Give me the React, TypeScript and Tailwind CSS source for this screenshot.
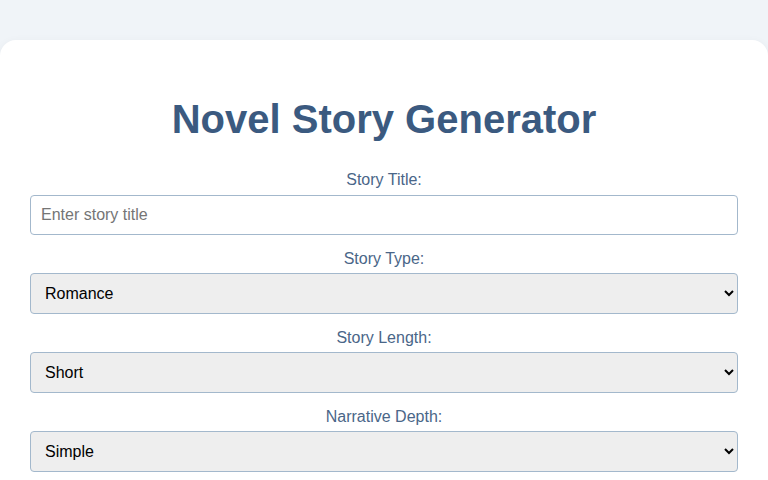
import React, { useState } from "react";

const fields = [
  { id: "type", label: "Story Type:", options: ["Romance", "Fantasy", "Mystery", "Sci-Fi", "Horror"] },
  { id: "length", label: "Story Length:", options: ["Short", "Medium", "Long"] },
  { id: "depth", label: "Narrative Depth:", options: ["Simple", "Moderate", "Complex"] },
];

export default function App() {
  const [title, setTitle] = useState("");

  return (
    <div className="min-h-screen bg-[#f0f4f8] pt-[40px] font-['Liberation_Sans',Arial,sans-serif]">
      <div className="bg-white rounded-t-[16px] px-[30px] pt-[30px] pb-[30px] shadow-[0_2px_10px_rgba(0,0,0,0.05)]">
        <h1 className="mt-[26px] mb-[29px] text-center text-[40px] leading-[46px] font-bold text-[#3b5a80]">
          Novel Story Generator
        </h1>

        {/* Title input */}
        <div className="mb-[15px]">
          <label className="block text-center text-[16px] leading-[18px] text-[#4a6688] mb-[6px]">
            Story Title:
          </label>
          <input
            value={title}
            onChange={(e) => setTitle(e.target.value)}
            placeholder="Enter story title"
            className="block w-full border border-[#a3b8cc] rounded-[4px] px-[10px] py-[10px] text-[16px] leading-[18px] text-black placeholder:text-[#757575] outline-none"
          />
        </div>

        {fields.map((f) => (
          <div key={f.id} className="mb-[15px]">
            <label className="block text-center text-[16px] leading-[18px] text-[#4a6688] mb-[5px]">
              {f.label}
            </label>
            <select className="block w-full h-[41px] border border-[#a3b8cc] rounded-[4px] px-[10px] bg-[#eeeeee] text-[16px] text-black outline-none">
              {f.options.map((o) => (
                <option key={o}>{o}</option>
              ))}
            </select>
          </div>
        ))}
      </div>
    </div>
  );
}
